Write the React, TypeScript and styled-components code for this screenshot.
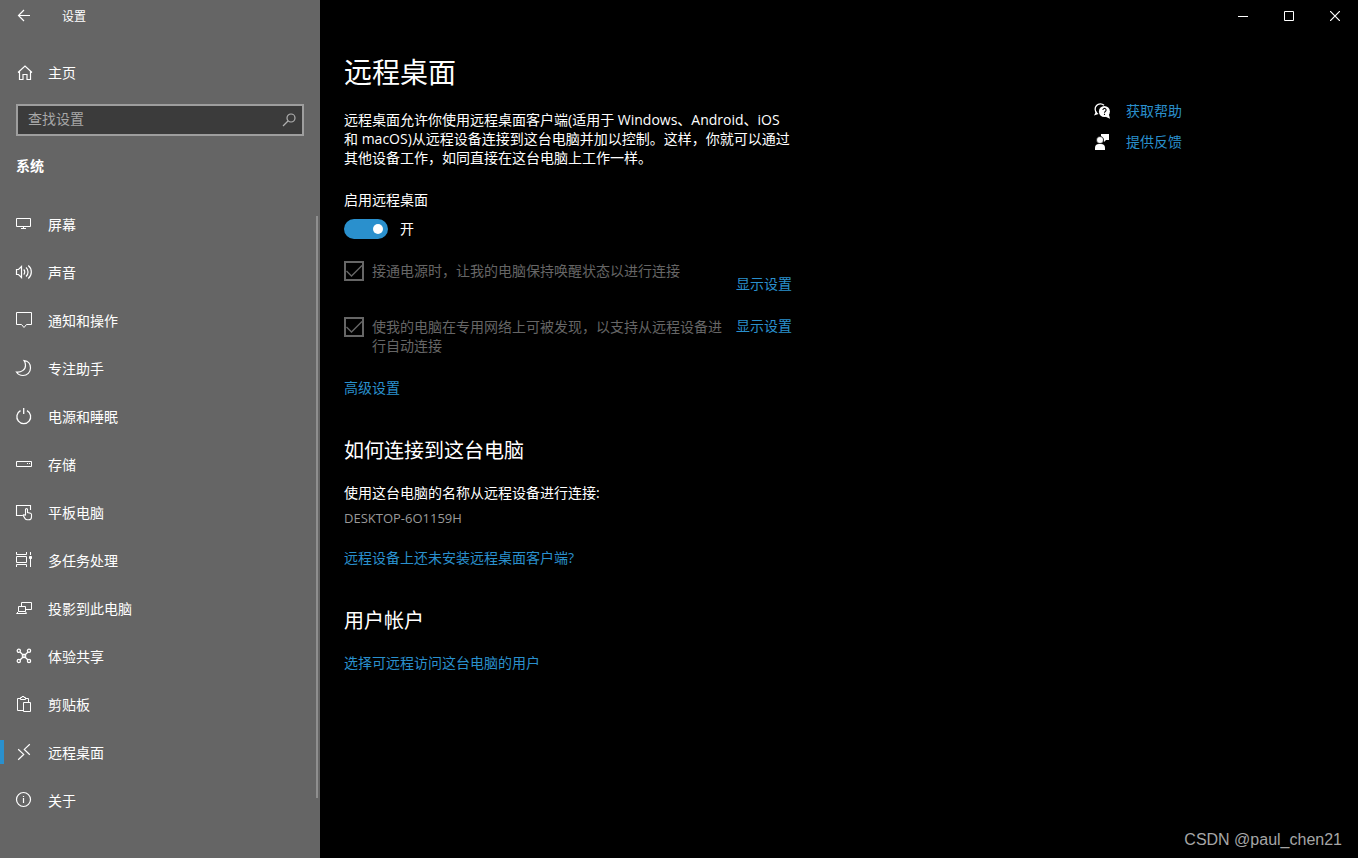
import React from 'react';
import styled, { createGlobalStyle } from 'styled-components';

const GlobalStyle = createGlobalStyle`
  * { box-sizing: border-box; }
  body {
    margin: 0;
    background: #000;
    color: #fff;
    font-family: "Open Sans", "Noto Sans CJK SC", sans-serif;
    font-size: 14px;
    line-height: 20px;
  }
  h1, h2, p, ul { margin: 0; padding: 0; }
  button, input { font: inherit; color: inherit; }
`;

const Window = styled.div`
  display: flex;
  min-height: 100vh;
`;

const Sidebar = styled.aside`
  flex: 0 0 320px;
  display: flex;
  flex-direction: column;
  background: #656565;
`;

const TitleRow = styled.div`
  display: flex;
  align-items: center;
  height: 32px;
`;

const BackButton = styled.button`
  width: 48px;
  height: 32px;
  padding: 0;
  display: flex;
  align-items: center;
  justify-content: center;
  border: 0;
  background: transparent;
`;

const WindowTitle = styled.span`
  margin-left: 14px;
  padding-top: 2px;
  font-size: 12px;
`;

const NavLink = styled.a<{ $active?: boolean }>`
  position: relative;
  display: flex;
  align-items: center;
  gap: 14px;
  height: 48px;
  padding-left: 14px;
  color: #fff;
  text-decoration: none;

  &::before {
    content: "";
    position: absolute;
    left: 0;
    top: 12px;
    width: 4px;
    height: 24px;
    background: ${(p) => (p.$active ? '#2a90cd' : 'transparent')};
  }
`;

const NavLabel = styled.span`
  padding-top: 2px;
`;

const HomeLink = styled(NavLink)`
  margin-top: 17px;
`;

const SearchBox = styled.label`
  display: flex;
  align-items: center;
  height: 32px;
  margin: 7px 16px 0;
  padding: 0 6px 0 10px;
  border: 2px solid #9e9e9e;
  background: #3b3b3b;
  color: #b0b0b0;
`;

const SearchInput = styled.input`
  flex: 1;
  min-width: 0;
  padding: 0 0 2px;
  border: 0;
  outline: 0;
  background: transparent;
  &::placeholder { color: #a8a8a8; opacity: 1; }
`;

const GroupTitle = styled.h2`
  margin: 20px 16px 24px;
  font-size: 14px;
  line-height: 20px;
  font-weight: 700;
`;

const NavArea = styled.nav`
  display: flex;
`;

const NavList = styled.ul`
  flex: 1;
  list-style: none;
`;

const ScrollThumb = styled.div`
  width: 2px;
  margin: 16px 2px 26px 0;
  background: #8f8f8f;
`;

const Main = styled.main`
  flex: 1;
  min-width: 0;
  display: flex;
  flex-direction: column;
`;

const Caption = styled.header`
  display: flex;
  justify-content: flex-end;
  height: 32px;
`;

const CaptionButton = styled.button`
  width: 46px;
  height: 32px;
  padding: 0;
  display: flex;
  align-items: center;
  justify-content: center;
  border: 0;
  background: transparent;
`;

const Columns = styled.div`
  flex: 1;
  display: grid;
  grid-template-columns: minmax(0, 1fr) 264px;
  padding-left: 24px;
`;

const Content = styled.div`
  max-width: 448px;
`;

const PageTitle = styled.h1`
  margin-top: 20px;
  font-size: 28px;
  line-height: 40px;
  font-weight: 400;
`;

const Intro = styled.p`
  margin-top: 18px;
  line-height: 19px;
  white-space: nowrap;
`;

const FieldTitle = styled.p`
  margin-top: 23px;
`;

const ToggleRow = styled.label`
  display: flex;
  align-items: center;
  gap: 12px;
  margin-top: 9px;
`;

const Toggle = styled.input`
  appearance: none;
  width: 44px;
  height: 20px;
  margin: 0;
  padding: 5px;
  display: flex;
  justify-content: flex-end;
  border-radius: 10px;
  background: #2a90cd;

  &::before {
    content: "";
    width: 10px;
    height: 10px;
    border-radius: 5px;
    background: #fff;
  }
  &:not(:checked) {
    justify-content: flex-start;
    background: #555;
  }
`;

const OptionRow = styled.div<{ $linkDrop?: boolean }>`
  display: flex;
  justify-content: space-between;
  margin-top: ${(p) => (p.$linkDrop ? '22px' : '24px')};

  > a {
    line-height: 18px;
    margin-top: ${(p) => (p.$linkDrop ? '14px' : '0')};
  }
`;

const OptionLabel = styled.label`
  display: flex;
  gap: 8px;
  width: 380px;
  line-height: 19px;
  color: #666;
`;

const CheckFrame = styled.span`
  position: relative;
  flex: 0 0 20px;
  height: 20px;

  svg {
    position: absolute;
    inset: 0;
  }
`;

const CheckInput = styled.input`
  appearance: none;
  display: block;
  width: 20px;
  height: 20px;
  margin: 0;
  border: 2px solid #666;
`;

const Link = styled.a`
  color: #2a90cd;
  text-decoration: none;
`;

const Block = styled.div<{ $gap: number }>`
  margin-top: ${(p) => p.$gap}px;
`;

const SectionTitle = styled.h2`
  margin-top: 39px;
  font-size: 20px;
  line-height: 28px;
  font-weight: 400;
`;

const PcName = styled.p`
  margin-top: 5px;
  font-size: 13px;
  color: #999;
`;

const Aside = styled.aside`
  display: flex;
  flex-direction: column;
  gap: 11px;
  padding-top: 69px;
`;

const AsideLink = styled(Link)`
  display: flex;
  align-items: center;
  gap: 16px;
`;

const Credit = styled.footer`
  align-self: flex-end;
  margin: 0 16px 8px;
  font-family: "Liberation Sans", Arial, sans-serif;
  font-size: 16px;
  color: #a6a6a6;
`;

const Glyph = ({ children, size = 20, weight = 1 }: { children: React.ReactNode; size?: number; weight?: number }) => (
  <svg width={size} height={size} viewBox={`0 0 ${size} ${size}`} fill="none" stroke="currentColor" strokeWidth={weight} aria-hidden="true">
    {children}
  </svg>
);

const navItems = [
  { label: '屏幕', icon: <path d="M2.5 4.5h14v8h-14zM9.5 12.5v2M7 14.5h5" /> },
  {
    label: '声音',
    weight: 1.2,
    icon: <path d="M2.5 7.5h2L7.5 4.5v11L4.5 12.5h-2zM9.7 7.5a3.5 3.5 0 0 1 0 5M12 5.5a6 6 0 0 1 0 9M14.3 3.5a8.5 8.5 0 0 1 0 13" />,
  },
  { label: '通知和操作', icon: <path d="M2.5 2.5h15v12h-5l-2.5 3-2.5-3h-5z" /> },
  {
    label: '专注助手',
    weight: 1.2,
    icon: <path d="M10 2.500C14.500 3 16.500 6.500 16.500 10A7.500 7.500 0 0 1 9 17.500C6 17.500 4 16.500 2.500 14C7 14.500 11.500 12 11.500 7.500C11.500 5.500 11 4 10 2.500Z" />,
  },
  { label: '电源和睡眠', weight: 1.3, icon: <path d="M6.500 4.600A6.900 6.900 0 1 0 13 4.600M9.700 2v6" /> },
  { label: '存储', icon: <path d="M2.500 7.500h15v5h-15zM13 9.500h1M15 9.500h1" /> },
  {
    label: '平板电脑',
    weight: 1.1,
    icon: <path d="M8.500 13.500h-6v-10h14V8M11.500 13.500V7.500a1 1 0 0 1 2 0v3l3 .8c.7.200 1 .6 1 1.300v2.400c0 1.500-1.200 2.800-2.800 2.800h-1.400c-1 0-1.700-.4-2.200-1.200l-2-3.300c.1-.9 1.300-.8 2.400.2" />,
  },
  {
    label: '多任务处理',
    icon: (
      <>
        <path d="M2.500 2v2.500h10V2M2.500 6.500h10v6h-10zM2.500 17v-2.500h10V17M16.500 2v3M16.500 9v8" />
        <path d="M15.500 6.500h2v2h-2z" fill="currentColor" />
      </>
    ),
  },
  {
    label: '投影到此电脑',
    icon: <path d="M7.500 8.500v-4h10v7h-5.500M4.500 13.500v-5h7v5M4.500 13.500l-2 2h10l-1-2z" />,
  },
  {
    label: '体验共享',
    weight: 1.3,
    icon: (
      <>
        <circle cx="4.800" cy="4.800" r="1.600" />
        <circle cx="15" cy="4.800" r="1.600" />
        <circle cx="4.800" cy="15" r="1.600" />
        <circle cx="15" cy="15" r="1.600" />
        <path d="M6 6l2.800 2.800M14 6l-2.800 2.800M6 14l2.800-2.800M14 14l-2.800-2.800M10 8.200l1.700 1.700-1.700 1.700-1.700-1.700z" />
      </>
    ),
  },
  {
    label: '剪贴板',
    icon: <path d="M9 16.500H3.500v-12h3M11.500 4.500h3V8M6.500 5.500v-2h1.500v-1h2v1h1.500v2zM9.500 8.500h7v9h-7z" />,
  },
  {
    label: '远程桌面',
    weight: 1.2,
    icon: <path d="M15.800 2.200l-5.500 5.200 5.500 5.400M4.200 7.200l5.500 5.200-5.500 5.400" />,
    active: true,
  },
  {
    label: '关于',
    weight: 1.2,
    icon: (
      <>
        <circle cx="9.500" cy="9.500" r="7" />
        <path d="M9.500 8v5M9.500 6v1" />
      </>
    ),
  },
];

const DisabledCheck = ({ children }: { children: React.ReactNode }) => (
  <OptionLabel>
    <CheckFrame>
      <CheckInput type="checkbox" defaultChecked disabled />
      <Glyph weight={1.4}>
        <path d="M2.500 10l5 5 10.500-10.500" />
      </Glyph>
    </CheckFrame>
    <span>{children}</span>
  </OptionLabel>
);

export default function App() {
  return (
    <>
      <GlobalStyle />
      <Window>
        <Sidebar>
          <TitleRow>
            <BackButton aria-label="返回">
              <Glyph weight={1.2}>
                <path d="M16 9.500H4.500M10 4L4.500 9.500 10 15" />
              </Glyph>
            </BackButton>
            <WindowTitle>设置</WindowTitle>
          </TitleRow>
          <HomeLink href="#home">
            <Glyph weight={1.2}>
              <path d="M4 9.500l7-6.500 7 6.500M5.500 8.500v8h3.500v-5h4v5h3.500v-8" />
            </Glyph>
            主页
          </HomeLink>
          <SearchBox>
            <SearchInput type="text" placeholder="查找设置" aria-label="查找设置" />
            <Glyph size={14} weight={1.2}>
              <circle cx="9" cy="5" r="4" />
              <path d="M6 8L1 13" />
            </Glyph>
          </SearchBox>
          <GroupTitle>系统</GroupTitle>
          <NavArea>
            <NavList>
              {navItems.map((item) => (
                <li key={item.label}>
                  <NavLink href="#" $active={item.active}>
                    <Glyph weight={item.weight}>{item.icon}</Glyph>
                    <NavLabel>{item.label}</NavLabel>
                  </NavLink>
                </li>
              ))}
            </NavList>
            <ScrollThumb />
          </NavArea>
        </Sidebar>
        <Main>
          <Caption>
            <CaptionButton aria-label="最小化">
              <Glyph size={10}><path d="M0 5.500h10" /></Glyph>
            </CaptionButton>
            <CaptionButton aria-label="最大化">
              <Glyph size={10}><path d="M.5.5h9v9h-9z" /></Glyph>
            </CaptionButton>
            <CaptionButton aria-label="关闭">
              <Glyph size={10} weight={1.2}><path d="M0 0l10 10M10 0L0 10" /></Glyph>
            </CaptionButton>
          </Caption>
          <Columns>
            <Content>
              <PageTitle>远程桌面</PageTitle>
              <Intro>
                远程桌面允许你使用远程桌面客户端(适用于 Windows、Android、iOS
                <br />和 macOS)从远程设备连接到这台电脑并加以控制。这样，你就可以通过
                <br />其他设备工作，如同直接在这台电脑上工作一样。
              </Intro>
              <FieldTitle>启用远程桌面</FieldTitle>
              <ToggleRow>
                <Toggle type="checkbox" role="switch" defaultChecked aria-label="启用远程桌面" />
                开
              </ToggleRow>
              <OptionRow $linkDrop>
                <DisabledCheck>接通电源时，让我的电脑保持唤醒状态以进行连接</DisabledCheck>
                <Link href="#display">显示设置</Link>
              </OptionRow>
              <OptionRow>
                <DisabledCheck>使我的电脑在专用网络上可被发现，以支持从远程设备进行自动连接</DisabledCheck>
                <Link href="#network">显示设置</Link>
              </OptionRow>
              <Block $gap={23}>
                <Link href="#advanced">高级设置</Link>
              </Block>
              <SectionTitle>如何连接到这台电脑</SectionTitle>
              <Block $gap={18}>使用这台电脑的名称从远程设备进行连接:</Block>
              <PcName>DESKTOP-6O1159H</PcName>
              <Block $gap={20}>
                <Link href="#client">远程设备上还未安装远程桌面客户端?</Link>
              </Block>
              <SectionTitle>用户帐户</SectionTitle>
              <Block $gap={18}>
                <Link href="#users">选择可远程访问这台电脑的用户</Link>
              </Block>
            </Content>
            <Aside>
              <AsideLink href="#help">
                <svg width="16" height="16" viewBox="0 0 16 16" aria-hidden="true">
                  <path d="M2.800 10A4.900 4.900 0 1 1 10 2.300" fill="none" stroke="#fff" strokeWidth="1.300" />
                  <path d="M2 8.500L0 12.500l4.500-1.500z" fill="#fff" />
                  <circle cx="10.400" cy="8.500" r="5.500" fill="#fff" />
                  <path d="M11 13.500l5 2.300-1.300-5z" fill="#fff" />
                  <path d="M8.900 7a1.600 1.600 0 1 1 2.400 1.400c-.6.300-.8.600-.8 1.300M10.500 10.800v1.200" fill="none" stroke="#000" strokeWidth="1.100" />
                </svg>
                获取帮助
              </AsideLink>
              <AsideLink href="#feedback">
                <svg width="16" height="16" viewBox="0 0 16 16" fill="#fff" aria-hidden="true">
                  <path d="M7 0h8v6h-3l-2 2V5L7 2z" />
                  <circle cx="6" cy="6" r="3.500" stroke="#000" strokeWidth=".6" />
                  <path d="M1 16v-2a4 4 0 0 1 4-4h2a4 4 0 0 1 4 4v2z" />
                </svg>
                提供反馈
              </AsideLink>
            </Aside>
          </Columns>
          <Credit>CSDN @paul_chen21</Credit>
        </Main>
      </Window>
    </>
  );
}
